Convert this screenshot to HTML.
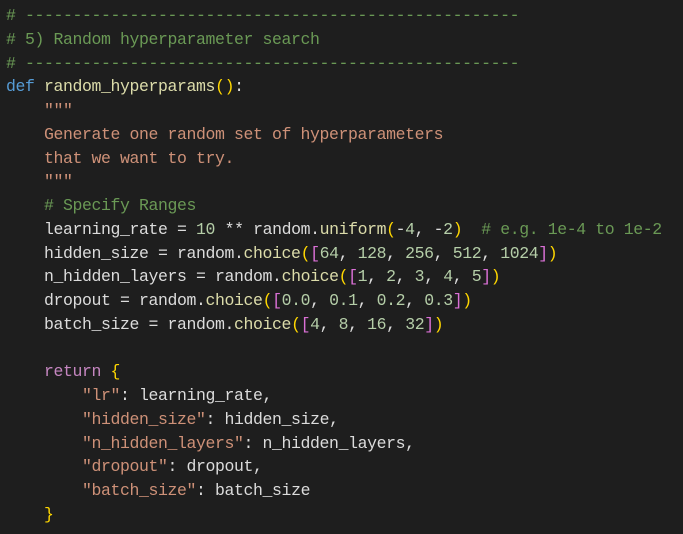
<!DOCTYPE html>
<html><head><style>
html,body{margin:0;padding:0;background:#1e1e1e;width:683px;height:534px;overflow:hidden}
pre{margin:0;position:absolute;left:6px;top:4px;font-family:"Liberation Mono",monospace;font-size:16.5px;letter-spacing:-0.4px;line-height:23.75px;color:#dcdcdc}
.c{color:#6a9955}.k{color:#569cd6}.f{color:#dcdcaa}.s{color:#ce9178}.n{color:#b5cea8}.y{color:#ffd700}.p{color:#da70d6}.r{color:#c586c0}
</style></head><body>
<pre><span class="c"># ----------------------------------------------------</span>
<span class="c"># 5) Random hyperparameter search</span>
<span class="c"># ----------------------------------------------------</span>
<span class="k">def</span> <span class="f">random_hyperparams</span><span class="y">()</span>:
    <span class="s">"""</span>
<span class="s">    Generate one random set of hyperparameters</span>
<span class="s">    that we want to try.</span>
<span class="s">    """</span>
    <span class="c"># Specify Ranges</span>
    learning_rate = <span class="n">10</span> ** random.<span class="f">uniform</span><span class="y">(</span>-<span class="n">4</span>, -<span class="n">2</span><span class="y">)</span>  <span class="c"># e.g. 1e-4 to 1e-2</span>
    hidden_size = random.<span class="f">choice</span><span class="y">(</span><span class="p">[</span><span class="n">64</span>, <span class="n">128</span>, <span class="n">256</span>, <span class="n">512</span>, <span class="n">1024</span><span class="p">]</span><span class="y">)</span>
    n_hidden_layers = random.<span class="f">choice</span><span class="y">(</span><span class="p">[</span><span class="n">1</span>, <span class="n">2</span>, <span class="n">3</span>, <span class="n">4</span>, <span class="n">5</span><span class="p">]</span><span class="y">)</span>
    dropout = random.<span class="f">choice</span><span class="y">(</span><span class="p">[</span><span class="n">0.0</span>, <span class="n">0.1</span>, <span class="n">0.2</span>, <span class="n">0.3</span><span class="p">]</span><span class="y">)</span>
    batch_size = random.<span class="f">choice</span><span class="y">(</span><span class="p">[</span><span class="n">4</span>, <span class="n">8</span>, <span class="n">16</span>, <span class="n">32</span><span class="p">]</span><span class="y">)</span>

    <span class="r">return</span> <span class="y">{</span>
        <span class="s">"lr"</span>: learning_rate,
        <span class="s">"hidden_size"</span>: hidden_size,
        <span class="s">"n_hidden_layers"</span>: n_hidden_layers,
        <span class="s">"dropout"</span>: dropout,
        <span class="s">"batch_size"</span>: batch_size
    <span class="y">}</span></pre>
</body></html>
